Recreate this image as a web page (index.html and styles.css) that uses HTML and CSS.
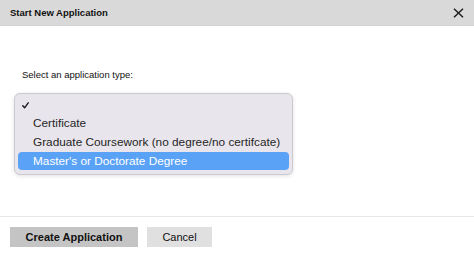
FILE: index.html
```html
<!DOCTYPE html>
<html>

<head>
	<meta charset="utf-8">
	<title>Start New Application</title>
	<link rel="stylesheet" href="styles.css">
</head>

<body>
	<div class="dialog">
		<div class="dialog-head">
			<span class="dialog-title">Start New Application</span>
			<span class="dialog-close">
				<svg width="11" height="10" viewBox="0 0 11 10">
					<path d="M1 0.8 L10 9.2 M10 0.8 L1 9.2" stroke="#1e1e1e" stroke-width="1.5" fill="none"/>
				</svg>
			</span>
		</div>
		<div class="dialog-body">
			<div class="field-label">Select an application type:</div>
			<div class="menu">
				<div class="menu-item menu-item-check">
					<svg class="menu-check" width="7" height="7" viewBox="0 0 7 7">
						<path d="M0.8 3.8 L2.6 5.8 L6.2 0.8" stroke="#1a1a1a" stroke-width="1.4" fill="none" stroke-linecap="round" stroke-linejoin="round"/>
					</svg>
				</div>
				<div class="menu-item">Certificate</div>
				<div class="menu-item">Graduate Coursework (no degree/no certifcate)</div>
				<div class="menu-item menu-item-active">Master's or Doctorate Degree</div>
			</div>
		</div>
		<div class="dialog-foot">
			<button class="btn btn-primary">Create Application</button>
			<button class="btn btn-secondary">Cancel</button>
		</div>
	</div>
</body>

</html>
```

FILE: styles.css
```css
html,
body {
	margin: 0;
	padding: 0;
	background-color: #ffffff;
}

body {
	font-family: "Liberation Sans", Arial, sans-serif;
	color: #111111;
}

.dialog {
	width: 474px;
	height: 257px;
	display: flex;
	flex-direction: column;
}

.dialog-head {
	height: 26px;
	box-sizing: border-box;
	background-color: #d9d9d9;
	border-bottom: 1px solid #d2d2d2;
	display: flex;
	align-items: center;
	justify-content: space-between;
	padding: 0 10px 0 10px;
}

.dialog-title {
	font-size: 9.5px;
	font-weight: bold;
	color: #111111;
}

.dialog-close {
	display: flex;
	margin-top: 1px;
}

.dialog-body {
	height: 190px;
	box-sizing: border-box;
	padding: 43px 0 0 14px;
}

.field-label {
	font-size: 9.5px;
	line-height: 12px;
	margin-left: 8px;
	color: #111111;
}

.menu {
	margin-top: 12px;
	width: 279px;
	height: 82px;
	box-sizing: border-box;
	padding: 1px 3px 3px 3px;
	background-color: #e9e5ec;
	border: 1px solid #cdc9d0;
	border-radius: 6px;
	box-shadow: 0 1px 4px rgba(0, 0, 0, 0.12);
}

.menu-item {
	height: 19px;
	line-height: 19px;
	padding-left: 15px;
	font-size: 11.8px;
	color: #262626;
	border-radius: 4px;
	white-space: nowrap;
}

.menu-item-check {
	box-sizing: border-box;
	padding-top: 7px;
}

.menu-check {
	display: block;
	margin-left: -11px;
}

.menu-item-active {
	background-color: #5aa2f6;
	color: #ffffff;
	height: 18px;
	line-height: 18px;
}

.dialog-foot {
	border-top: 1px solid #e6e6e6;
	padding: 10px 10px 0 10px;
	display: flex;
	gap: 9px;
}

.btn {
	height: 20px;
	border: none;
	padding: 0;
	font-family: "Liberation Sans", Arial, sans-serif;
	font-size: 11px;
	color: #111111;
}

.btn-primary {
	width: 128px;
	background-color: #c4c4c4;
	font-weight: bold;
}

.btn-secondary {
	width: 65px;
	background-color: #e0e0e0;
}
```
